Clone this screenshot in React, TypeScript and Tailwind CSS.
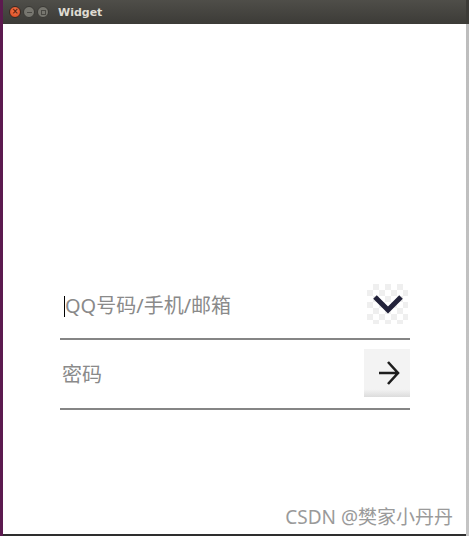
import React from "react";

export default function App() {
  return (
    <div className="relative flex w-[469px] h-[536px] overflow-hidden bg-white">
      <div className="w-[3px] h-full bg-[#5c1a4f]" />
      <div className="flex flex-col flex-1 h-full">
        <div className="flex items-center h-[24px] bg-[linear-gradient(to_bottom,#4f4e49,#3c3b37)] pl-[6px]">
          <div className="flex items-center gap-[2px]">
            <div className="w-[12px] h-[12px] rounded-full bg-[radial-gradient(circle_at_50%_40%,#f27a4e,#d8431c)] border border-[#3a2a22] flex items-center justify-center">
              <span className="text-[8px] leading-none text-[#5a1e0c] font-bold" style={{ fontFamily: "DejaVu Sans, sans-serif" }}>×</span>
            </div>
            <div className="w-[12px] h-[12px] rounded-full bg-[#77766f] border border-[#3a3935] flex items-center justify-center">
              <div className="w-[5px] h-[1px] bg-[#4a4944]" />
            </div>
            <div className="w-[12px] h-[12px] rounded-full bg-[#77766f] border border-[#3a3935] flex items-center justify-center">
              <div className="w-[5px] h-[5px] border border-[#4a4944]" />
            </div>
          </div>
          <span
            className="ml-[9px] text-[11px] font-bold text-[#dfdbd2] leading-none"
            style={{ fontFamily: "'DejaVu Sans', sans-serif" }}
          >
            Widget
          </span>
        </div>
        <div className="flex-1 bg-white flex flex-col pl-[57px] pt-[260px]">
          <div className="w-[350px] flex flex-col" style={{ fontFamily: "'Noto Sans', 'Noto Sans CJK SC', sans-serif" }}>
            <div className="flex items-center justify-between h-[40px]">
              <div className="flex items-center pl-[4px] pt-[4px]">
                <div className="w-[1px] h-[21px] bg-black" />
                <span className="text-[20px] leading-none text-[#8a8a8a]">QQ号码/手机/邮箱</span>
              </div>
              <div className="w-[41px] h-[40px] mr-[2px] flex items-center justify-center bg-[repeating-conic-gradient(#efefef_0%_25%,#ffffff_0%_50%)] bg-[length:12px_12px]">
                <svg width="32" height="22" viewBox="0 0 32 22">
                  <path d="M3 4 L16 17 L29 4" fill="none" stroke="#22223a" strokeWidth="5" strokeLinecap="butt" strokeLinejoin="miter" />
                </svg>
              </div>
            </div>
            <div className="mt-[14px] h-[2px] bg-[#858585]" />
            <div className="flex items-center justify-between h-[48px] mt-[9px]">
              <span className="pl-[2px] pt-[4px] text-[20px] leading-none text-[#8a8a8a]">密码</span>
              <div className="w-[46px] h-[48px] flex items-center justify-center bg-[linear-gradient(to_bottom,#f3f3f3_84%,#dcdcdc)]">
                <svg width="24" height="26" viewBox="0 0 24 26" className="ml-[4px]">
                  <path d="M2 13 H21 M11 2 L21 13 L11 24" fill="none" stroke="#1e1e1e" strokeWidth="2.6" strokeLinecap="butt" strokeLinejoin="miter" />
                </svg>
              </div>
            </div>
            <div className="mt-[11px] h-[2px] bg-[#858585]" />
          </div>
        </div>
        <div className="h-[2px] bg-[#2e2e2e]" />
      </div>
      <div className="w-[3px] h-full bg-[linear-gradient(to_bottom,#3c3b37_0px,#3c3b37_24px,#bdbdbd_24px,#c4c4c4)]" />
      <div
        className="absolute right-[16px] bottom-[9px] text-[19px] leading-none text-[#9a9a9a]"
        style={{ fontFamily: "'Noto Sans', 'Noto Sans CJK SC', sans-serif", textShadow: "1px 1px 0 #ffffff" }}
      >
        CSDN @樊家小丹丹
      </div>
    </div>
  );
}
